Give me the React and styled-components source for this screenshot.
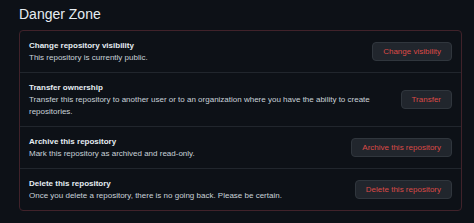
import React from "react";
import styled, { createGlobalStyle } from "styled-components";

const Global = createGlobalStyle`
  html, body { margin: 0; padding: 0; background: #0d1117; }
  body { font-family: "Liberation Sans", Arial, sans-serif; color: #c9d1d9; }
`;

const Page = styled.div`
  width: 474px;
  height: 223px;
  box-sizing: border-box;
  padding: 5px 12px 0 19px;
  background: #0d1117;
`;

const Heading = styled.h2`
  margin: 0 0 6px 0;
  font-size: 14px;
  font-weight: 400;
  line-height: 19px;
  color: #e6edf3;
`;

const Box = styled.div`
  width: 443px;
  box-sizing: border-box;
  border: 1px solid #40222a;
  border-radius: 4px;
`;

const Row = styled.div`
  display: flex;
  align-items: center;
  justify-content: space-between;
  gap: 20px;
  padding: 8.5px 9px 8.5px 9px;
  border-top: ${(p) => (p.$first ? "none" : "1px solid #21262d")};
`;

const Info = styled.div`
  flex: 1;
  min-width: 0;
`;

const Title = styled.div`
  font-size: 8px;
  font-weight: 700;
  line-height: 12px;
  color: #e6edf3;
`;

const Desc = styled.div`
  font-size: 8px;
  line-height: 12px;
  color: #c9d1d9;
`;

const DangerButton = styled.button`
  flex-shrink: 0;
  height: 19px;
  padding: 0 10px;
  border: 1px solid #30363d;
  border-radius: 4px;
  background: #21262d;
  color: #dc4a47;
  font-family: "Liberation Sans", Arial, sans-serif;
  font-size: 8px;
  line-height: 17px;
  cursor: pointer;
`;

const rows = [
  {
    title: "Change repository visibility",
    desc: "This repository is currently public.",
    action: "Change visibility",
  },
  {
    title: "Transfer ownership",
    desc: "Transfer this repository to another user or to an organization where you have the ability to create repositories.",
    action: "Transfer",
  },
  {
    title: "Archive this repository",
    desc: "Mark this repository as archived and read-only.",
    action: "Archive this repository",
  },
  {
    title: "Delete this repository",
    desc: "Once you delete a repository, there is no going back. Please be certain.",
    action: "Delete this repository",
  },
];

export default function App() {
  return (
    <>
      <Global />
      <Page>
        <Heading>Danger Zone</Heading>
        <Box>
          {rows.map((r, i) => (
            <Row key={r.title} $first={i === 0}>
              <Info>
                <Title>{r.title}</Title>
                <Desc>{r.desc}</Desc>
              </Info>
              <DangerButton>{r.action}</DangerButton>
            </Row>
          ))}
        </Box>
      </Page>
    </>
  );
}
